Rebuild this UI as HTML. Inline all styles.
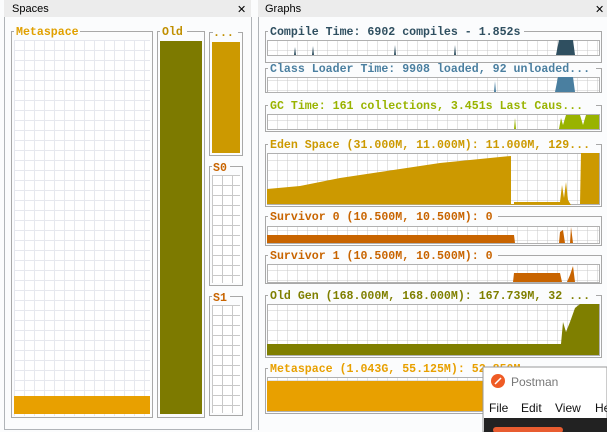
<!DOCTYPE html>
<html><head><style>
html,body{margin:0;padding:0;width:607px;height:432px;overflow:hidden;background:#fbfcfd;}
svg{display:block}
.t{font-family:"Liberation Mono",monospace;font-weight:bold;font-size:11.6px;}
.h{font-family:"Liberation Sans",sans-serif;font-size:11px;fill:#000}
</style></head><body>
<svg width="607" height="432" viewBox="0 0 607 432" xmlns="http://www.w3.org/2000/svg">
<defs>
<pattern id="g" x="267" y="0" width="10" height="10" patternUnits="userSpaceOnUse"><rect width="10" height="10" fill="#fff"/><path d="M0 0H10M0 0V10" stroke="#c8c8c8" stroke-width="1"/></pattern>
<pattern id="gl" x="14" y="40" width="10" height="10" patternUnits="userSpaceOnUse"><rect width="10" height="10" fill="#fff"/><path d="M0 0.5H10M0.5 0V10" stroke="#e6e8ee" stroke-width="1"/></pattern>
<pattern id="gs" x="212" y="175" width="10" height="10" patternUnits="userSpaceOnUse"><rect width="10" height="10" fill="#fff"/><path d="M0 0.5H10M0.5 0V10" stroke="#c8c8c8" stroke-width="1"/></pattern>
</defs>
<rect width="607" height="432" fill="#fbfcfd"/>
<!-- headers -->
<rect x="4" y="0" width="247" height="17" fill="#ececec"/>
<rect x="258" y="0" width="349" height="17" fill="#ececec"/>
<text x="12" y="12" class="h">Spaces</text><text x="237" y="13" class="h" font-size="13">✕</text>
<text x="265" y="12" class="h">Graphs</text><text x="595" y="13" class="h" font-size="13">✕</text>
<path d="M4.5 17V429.5H251.5V17M258.5 17V430" stroke="#b0b4b8" fill="none"/>
<!-- Spaces -->
<rect x="11.5" y="31.5" width="141" height="386" fill="#fbfcfd" stroke="#a8a8a8"/>
<rect x="14" y="40" width="136" height="376" fill="url(#gl)"/>
<rect x="14" y="396" width="136" height="18" fill="#e8a000"/>
<rect x="14" y="31" width="66" height="2" fill="#fbfcfd"/>
<text x="16" y="35" class="t" fill="#e0a000">Metaspace</text>
<rect x="157.5" y="31.5" width="47" height="386" fill="#fbfcfd" stroke="#a8a8a8"/>
<rect x="160" y="41" width="42" height="373" fill="#7d7a00"/>
<rect x="160" y="31" width="27" height="2" fill="#fbfcfd"/>
<text x="162" y="35" class="t" fill="#c08f00">Old</text>
<rect x="209.5" y="32.5" width="33" height="123" fill="#fbfcfd" stroke="#a8a8a8"/>
<rect x="212" y="42" width="28" height="111" fill="#cc9900"/>
<rect x="213" y="31" width="25" height="3" fill="#fbfcfd"/>
<text x="213" y="36" class="t" fill="#c08f00" font-size="9">...</text>
<rect x="209.5" y="166.5" width="33" height="119" fill="#fbfcfd" stroke="#a8a8a8"/>
<rect x="212" y="175" width="28" height="108" fill="url(#gs)"/>
<rect x="212" y="165" width="18" height="3" fill="#fbfcfd"/>
<text x="213" y="171" class="t" fill="#c86400">S0</text>
<rect x="209.5" y="296.5" width="33" height="119" fill="#fbfcfd" stroke="#a8a8a8"/>
<rect x="212" y="305" width="28" height="108" fill="url(#gs)"/>
<rect x="212" y="295" width="18" height="3" fill="#fbfcfd"/>
<text x="213" y="301" class="t" fill="#c86400">S1</text>
<!-- Graph boxes -->
<g stroke="#a8a8a8" fill="none">
<rect x="265.5" y="31.5" width="336" height="31"/>
<rect x="265.5" y="68.5" width="336" height="24"/>
<rect x="265.5" y="105.5" width="336" height="26"/>
<rect x="265.5" y="144.5" width="336" height="62"/>
<rect x="265.5" y="216.5" width="336" height="29"/>
<rect x="265.5" y="255.5" width="336" height="28"/>
<rect x="265.5" y="295.5" width="336" height="62"/>
<rect x="265.5" y="368.5" width="336" height="45"/>
</g>
<g fill="url(#g)" stroke="#b0b0b0">
<rect x="267.5" y="40.5" width="332" height="15"/>
<rect x="267.5" y="77.5" width="332" height="15"/>
<rect x="267.5" y="114.5" width="332" height="15"/>
<rect x="267.5" y="153.5" width="332" height="51"/>
<rect x="267.5" y="226.5" width="332" height="17"/>
<rect x="267.5" y="264.5" width="332" height="18"/>
<rect x="267.5" y="304.5" width="332" height="51"/>
<rect x="267.5" y="377.5" width="332" height="34"/>
</g>
<!-- data -->
<g fill="#2f4f60"><path d="M294 55L295 47L296 55ZM312 55L313 46L314 55ZM394 55L395 45L396 55ZM454 55L455 45L456 55ZM556 55L559 40H573L575 55Z"/></g>
<g fill="#4a7fa0"><path d="M494 92L495 81L496 92ZM555 92L558 77H573L575 92Z"/></g>
<g fill="#99b300"><path d="M514 129L515 118L516 129ZM559 129L561 118L563 125L566 115H580L583 125L586 115H599V129Z"/></g>
<path fill="#cc9900" d="M267 204V189L300 186L320 182L340 178L360 175L380 172L400 169L420 166L440 163L460 161L480 159L500 157L511 156V204L514 204V202L560 202L562 185L564 198L566 182L568 200L571 205ZM580 204L581 153H599V204Z"/>
<path fill="#c86400" d="M267 243V235H514L515 243ZM559 243L560 232L563 230L565 243ZM570 243L571 227L573 243Z"/>
<path fill="#c86400" d="M513 282L514 273H560L562 282ZM567 282L570 275L573 266L575 282Z"/>
<path fill="#7f7f00" d="M267 355V344H561L563 322L566 332L570 322L575 308L580 304H599V355Z"/>
<rect x="267" y="381" width="332" height="30" fill="#e8a000"/>
<!-- labels -->
<g class="t">
<rect x="268" y="29" width="256" height="5" fill="#fbfcfd"/><text x="270" y="35" fill="#2f4f60">Compile Time: 6902 compiles - 1.852s</text>
<rect x="268" y="66" width="328" height="5" fill="#fbfcfd"/><text x="270" y="72" fill="#4a7fa0">Class Loader Time: 9908 loaded, 92 unloaded...</text>
<rect x="268" y="103" width="328" height="5" fill="#fbfcfd"/><text x="270" y="109" fill="#99b300">GC Time: 161 collections, 3.451s  Last Caus...</text>
<rect x="268" y="142" width="328" height="5" fill="#fbfcfd"/><text x="270" y="148" fill="#cc9900">Eden Space (31.000M, 11.000M): 11.000M, 129...</text>
<rect x="268" y="214" width="230" height="5" fill="#fbfcfd"/><text x="270" y="220" fill="#c86400">Survivor 0 (10.500M, 10.500M): 0</text>
<rect x="268" y="253" width="230" height="5" fill="#fbfcfd"/><text x="270" y="259" fill="#c86400">Survivor 1 (10.500M, 10.500M): 0</text>
<rect x="268" y="293" width="328" height="5" fill="#fbfcfd"/><text x="270" y="299" fill="#7f7f00">Old Gen (168.000M, 168.000M): 167.739M, 32 ...</text>
<rect x="268" y="366" width="300" height="5" fill="#fbfcfd"/><text x="270" y="372" fill="#e8a000">Metaspace (1.043G, 55.125M): 52.850M</text>
</g>
<!-- Postman window -->
<rect x="483" y="367" width="124" height="65" fill="#fff" stroke="#9a9a9a"/>
<circle cx="498" cy="381" r="7" fill="#ef5b25"/>
<path d="M495 384L501 378" stroke="#fff" stroke-width="1.5"/>
<text x="511" y="386" font-family="Liberation Sans,sans-serif" font-size="12" fill="#777">Postman</text>
<text x="489" y="412" font-family="Liberation Sans,sans-serif" font-size="12" fill="#111">File</text>
<text x="521" y="412" font-family="Liberation Sans,sans-serif" font-size="12" fill="#111">Edit</text>
<text x="555" y="412" font-family="Liberation Sans,sans-serif" font-size="12" fill="#111">View</text>
<text x="595" y="412" font-family="Liberation Sans,sans-serif" font-size="12" fill="#111">He</text>
<rect x="484" y="418" width="123" height="14" fill="#222"/>
<rect x="493" y="427" width="70" height="6" rx="3" fill="#e85c30"/>
</svg>
</body></html>
